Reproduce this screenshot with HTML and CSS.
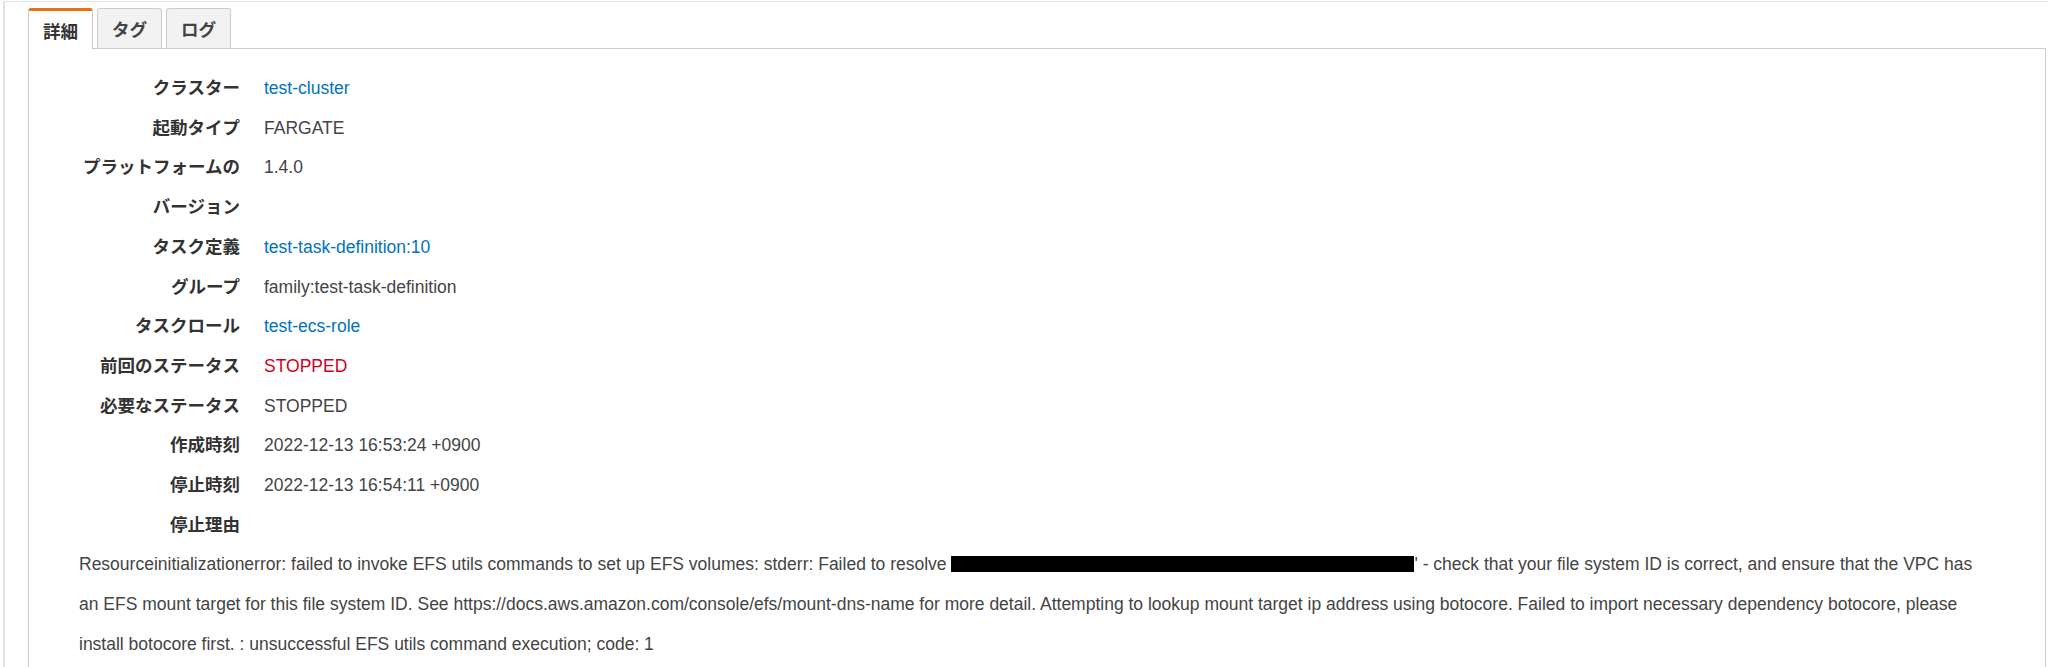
FILE: index.html
```html
<!DOCTYPE html>
<html lang="ja">
<head>
<meta charset="utf-8">
<title>タスク詳細</title>
<link rel="stylesheet" href="styles.css">
</head>
<body>
<div class="frame">
  <div class="tabs">
    <div class="tab tab-active">詳細</div>
    <div class="tab">タグ</div>
    <div class="tab">ログ</div>
  </div>
  <div class="panel">
    <dl class="details">
      <dt>クラスター</dt><dd><a class="link" href="#">test-cluster</a></dd>
      <dt>起動タイプ</dt><dd>FARGATE</dd>
      <dt>プラットフォームのバージョン</dt><dd>1.4.0</dd>
      <dt>タスク定義</dt><dd><a class="link" href="#">test-task-definition:10</a></dd>
      <dt>グループ</dt><dd>family:test-task-definition</dd>
      <dt>タスクロール</dt><dd><a class="link" href="#">test-ecs-role</a></dd>
      <dt>前回のステータス</dt><dd class="status-stopped">STOPPED</dd>
      <dt>必要なステータス</dt><dd>STOPPED</dd>
      <dt>作成時刻</dt><dd>2022-12-13 16:53:24 +0900</dd>
      <dt>停止時刻</dt><dd>2022-12-13 16:54:11 +0900</dd>
      <dt>停止理由</dt><dd></dd>
    </dl>
    <p class="reason">Resourceinitializationerror: failed to invoke EFS utils commands to set up EFS volumes: stderr: Failed to resolve <span class="redact"></span>' - check that your file system ID is correct, and ensure that the VPC has an EFS mount target for this file system ID. See https://docs.aws.amazon.com/console/efs/mount-dns-name for more detail. Attempting to lookup mount target ip address using botocore. Failed to import necessary dependency botocore, please install botocore first. : unsuccessful EFS utils command execution; code: 1</p>
  </div>
</div>
</body>
</html>
```

FILE: styles.css
```css
html, body {
  margin: 0;
  padding: 0;
  background: #ffffff;
}

body {
  font-family: "Liberation Sans", "Noto Sans CJK JP", sans-serif;
  font-size: 17.5px;
  color: #444444;
  overflow: hidden;
}

.frame {
  margin: 1px 0 0 3px;
  border-top: 1px solid #e2e2e2;
  border-left: 2px solid #e2e2e2;
  padding: 6px 0 0 23px;
}

.tabs {
  display: flex;
  align-items: flex-end;
  gap: 4px;
}

.tab {
  box-sizing: border-box;
  height: 40px;
  padding: 0 14px;
  border: 1px solid #cccccc;
  border-bottom: none;
  border-radius: 3px 3px 0 0;
  background: #f2f2f2;
  color: #444444;
  font-weight: bold;
  display: flex;
  align-items: center;
  justify-content: center;
}

.tab-active {
  position: relative;
  height: 41px;
  margin-bottom: -1px;
  border-top: 3px solid #ec7211;
  background: #ffffff;
  color: #333333;
}

.panel {
  border: 1px solid #cccccc;
  border-bottom: none;
  margin-right: 2px;
  padding: 20px 55px 0 50px;
  height: 598px;
  line-height: 39.7px;
}

.details {
  display: grid;
  grid-template-columns: 161px 1fr;
  column-gap: 24px;
  margin: 0;
}

.details dt {
  text-align: right;
  font-weight: bold;
  color: #333333;
}

.details dd {
  margin: 0;
  color: #444444;
}

.link {
  color: #0073bb;
  text-decoration: none;
}

.details .status-stopped {
  color: #d0021b;
}

.reason {
  margin: 0;
  color: #444444;
}

.redact {
  display: inline-block;
  width: 463px;
  height: 16px;
  background: #000000;
  vertical-align: -2px;
}
```
